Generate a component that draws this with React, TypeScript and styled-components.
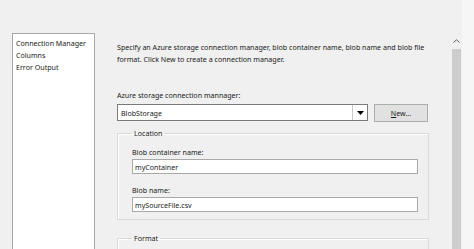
import styled, { createGlobalStyle } from 'styled-components'

const GlobalStyle = createGlobalStyle`
  html, body {
    margin: 0;
    padding: 0;
    background: #f0f0f0;
  }
  body {
    font-family: 'Noto Sans', 'Open Sans', sans-serif;
    font-size: 7.1px;
    color: #1a1a1a;
  }
`

const Page = styled.div`
  width: 474px;
  height: 249px;
  overflow: hidden;
  display: flex;
  flex-direction: column;
  background: #f0f0f0;
`

const Header = styled.div`
  height: 4px;
  overflow: hidden;
  background: #f3f3f3;
  padding-left: 17px;
`

const HeaderText = styled.div`
  margin-top: -4px;
  line-height: 10px;
  color: #333;
  white-space: nowrap;
`

const Body = styled.div`
  flex: 1;
  display: grid;
  grid-template-columns: 83px 1fr 14px 12px;
  padding: 33px 0 0 12px;
`

const NavList = styled.ul`
  list-style: none;
  margin: 0;
  padding: 3px 0 0 3px;
  background: #fff;
  border: 1px solid #a7a7a7;
  border-bottom: none;
  width: 83px;
  box-sizing: border-box;
`

const NavItem = styled.li`
  line-height: 12px;
  white-space: nowrap;
`

const Content = styled.div`
  padding-left: 22px;
  display: flex;
  flex-direction: column;
`

const Description = styled.p`
  margin: 9px 0 0;
  line-height: 11.5px;
  white-space: nowrap;
`

const FieldLabel = styled.div<{ $top: number }>`
  line-height: 10px;
  margin-top: ${(p) => p.$top}px;
`

const ComboRow = styled.div`
  display: flex;
  gap: 6px;
  margin-top: 4px;
`

const Combo = styled.div`
  width: 251px;
  height: 17px;
  box-sizing: border-box;
  background: #fff;
  border: 1px solid #7a7a7a;
  display: flex;
  align-items: center;
  padding-left: 3px;
`

const ComboText = styled.span`
  flex: 1;
`

const ComboArrow = styled.div`
  width: 14px;
  height: 15px;
  border-left: 1px solid #c8c8c8;
  display: flex;
  align-items: center;
  justify-content: center;
`

const NewButton = styled.div`
  width: 54px;
  height: 18px;
  box-sizing: border-box;
  background: #e1e1e1;
  border: 1px solid #adadad;
  display: flex;
  align-items: center;
  justify-content: center;
  u {
    text-decoration: underline;
  }
`

const Group = styled.fieldset<{ $top: number; $height?: number }>`
  margin: ${(p) => p.$top}px 0 0;
  padding: 3px 10px 11px 14px;
  border: 1px solid #d9d9d9;
  box-shadow: inset 1px 1px 0 #fff;
  min-width: 0;
  width: 312px;
  box-sizing: border-box;
  height: ${(p) => (p.$height ? `${p.$height}px` : 'auto')};
`

const Legend = styled.legend`
  padding: 0 2px;
  line-height: 10px;
`

const Input = styled.div`
  height: 15px;
  width: 286px;
  box-sizing: border-box;
  background: #fff;
  border: 1px solid #a9a9a9;
  padding-left: 2px;
  display: flex;
  align-items: center;
  margin-top: 2px;
`

const Scroll = styled.div`
  display: flex;
  flex-direction: column;
  align-items: flex-end;
  padding-right: 1px;
`

const ScrollArrow = styled.div`
  width: 9px;
  height: 10px;
  display: flex;
  align-items: center;
  justify-content: center;
  margin-top: 3px;
`

const ScrollThumb = styled.div`
  width: 9px;
  flex: 1;
  margin-top: 3px;
  background: #cdcdcd;
`

const Edge = styled.div`
  background: #f6f6f6;
  margin-top: -33px;
`

export default function App() {
  return (
    <>
      <GlobalStyle />
      <Page>
        <Header>
          <HeaderText>
            Configure the properties used to connect to and obtain data from Azure Blob storage.
          </HeaderText>
        </Header>
        <Body>
          <NavList>
            <NavItem>Connection Manager</NavItem>
            <NavItem>Columns</NavItem>
            <NavItem>Error Output</NavItem>
          </NavList>
          <Content>
            <Description>
              Specify an Azure storage connection manager, blob container name, blob name and blob file
              <br />
              format. Click New to create a connection manager.
            </Description>
            <FieldLabel $top={25}>Azure storage connection mannager:</FieldLabel>
            <ComboRow>
              <Combo>
                <ComboText>BlobStorage</ComboText>
                <ComboArrow>
                  <svg width="7" height="4" viewBox="0 0 7 4">
                    <path d="M0 0h7L3.5 4z" fill="#000" />
                  </svg>
                </ComboArrow>
              </Combo>
              <NewButton>
                <span>
                  <u>N</u>ew...
                </span>
              </NewButton>
            </ComboRow>
            <Group $top={6} $height={92}>
              <Legend>Location</Legend>
              <FieldLabel $top={6}>Blob container name:</FieldLabel>
              <Input>myContainer</Input>
              <FieldLabel $top={11}>Blob name:</FieldLabel>
              <Input>mySourceFile.csv</Input>
            </Group>
            <Group $top={13}>
              <Legend>Format</Legend>
            </Group>
          </Content>
          <Scroll>
            <ScrollArrow>
              <svg width="7" height="4" viewBox="0 0 7 4">
                <path d="M0.5 3.5L3.5 0.8L6.5 3.5" fill="none" stroke="#606060" strokeWidth="1" />
              </svg>
            </ScrollArrow>
            <ScrollThumb />
          </Scroll>
          <Edge />
        </Body>
      </Page>
    </>
  )
}
